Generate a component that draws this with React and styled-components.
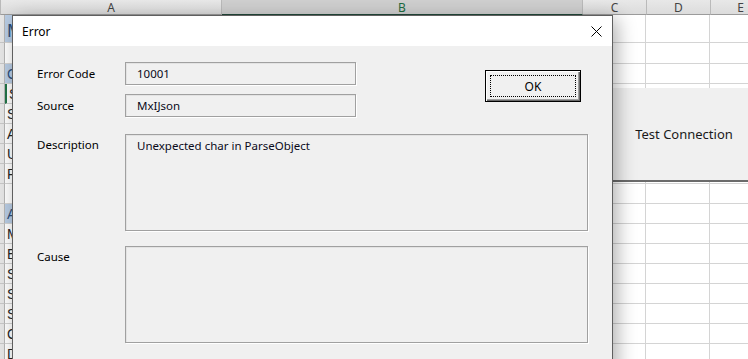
import React from 'react';
import styled, { createGlobalStyle } from 'styled-components';

const GlobalStyle = createGlobalStyle`
  * { box-sizing: border-box; }
  html, body {
    margin: 0;
    padding: 0;
    background: #ffffff;
    overflow: hidden;
  }
  #root {
    width: 748px;
    height: 359px;
  }
`;

const COLS = [5, 216, 361, 64, 64, 60];
const HEADERS = ['', 'A', 'B', 'C', 'D', 'E'];

const ROWS = [
  { h: 28, text: 'M', kind: 'title' },
  { h: 21, text: '' },
  { h: 20, text: 'C', kind: 'head' },
  { h: 20, text: 'S', selected: true },
  { h: 20, text: 'S' },
  { h: 20, text: 'A' },
  { h: 20, text: 'U' },
  { h: 20, text: 'P' },
  { h: 20, text: '' },
  { h: 20, text: 'A', kind: 'head' },
  { h: 20, text: 'M' },
  { h: 20, text: 'E' },
  { h: 20, text: 'S' },
  { h: 20, text: 'S' },
  { h: 20, text: 'S' },
  { h: 20, text: 'C' },
  { h: 20, text: 'D' },
];

/* ---------- spreadsheet behind ---------- */

const Stage = styled.div`
  position: relative;
  width: 748px;
  height: 359px;
  overflow: hidden;
  background: #fff;
`;

const Sheet = styled.div`
  display: flex;
  flex-direction: column;
  width: 800px;
`;

const HeaderRow = styled.div`
  display: flex;
  height: 15px;
`;

const HeaderCell = styled.div`
  flex: 0 0 ${p => p.$w}px;
  height: 15px;
  display: flex;
  align-items: center;
  justify-content: center;
  font-family: 'Noto Sans', 'Open Sans', sans-serif;
  font-size: 12px;
  color: ${p => (p.$active ? '#1e6b40' : '#444')};
  background: ${p => (p.$active ? '#cfcfcf' : 'linear-gradient(#e8e8e8, #dcdcdc)')};
  border-right: 1px solid #bababa;
  border-bottom: 1px solid ${p => (p.$active ? '#22493a' : '#9b9b9b')};
  line-height: 1;
  padding-top: 2px;
`;

const Row = styled.div`
  display: flex;
  height: ${p => p.$h}px;
`;

const Cell = styled.div`
  flex: 0 0 ${p => p.$w}px;
  height: 100%;
  border-right: 1px solid #d4d4d4;
  border-bottom: 1px solid #d4d4d4;
  background: #fff;
`;

const RowStub = styled(Cell)`
  background: #e6e6e6;
  border-right: 1px solid #b5b5b5;
  border-bottom: 1px solid #c8c8c8;
`;

const NameCell = styled(Cell)`
  display: flex;
  align-items: flex-end;
  padding: 0 0 2px 2px;
  font-family: 'Liberation Sans', Arial, sans-serif;
  font-size: ${p => (p.$kind === 'title' ? 19 : 14)}px;
  color: ${p => (p.$kind ? '#2f4f7a' : '#262626')};
  background: ${p => (p.$kind ? '#b8cce4' : '#fff')};
  border-left: ${p => (p.$selected ? '2px solid #217346' : '0')};
  line-height: 1;
`;

const SheetButton = styled.div`
  position: absolute;
  left: 600px;
  top: 88px;
  width: 168px;
  height: 94px;
  background: #f0f0f0;
  border-bottom: 2px solid #6b6b6b;
  display: flex;
  align-items: center;
  justify-content: center;
  font-family: 'Noto Sans', 'Open Sans', sans-serif;
  font-size: 13px;
  color: #1a1a1a;
`;

/* ---------- dialog ---------- */

const Dialog = styled.div`
  position: absolute;
  left: 12px;
  top: 15px;
  width: 601px;
  height: 380px;
  background: #f0f0f0;
  border: 1px solid #5f5f5f;
  box-shadow: 4px 4px 18px rgba(0, 0, 0, 0.32);
  display: flex;
  flex-direction: column;
  font-family: 'Noto Sans', 'Open Sans', sans-serif;
  font-size: 11.5px;
  color: #000;
`;

const TitleBar = styled.div`
  height: 30px;
  flex: 0 0 30px;
  background: #fff;
  display: flex;
  align-items: center;
  justify-content: space-between;
  padding: 0 10px 0 9px;
  font-size: 12px;
`;

const CloseIcon = () => (
  <svg width="11" height="11" viewBox="0 0 11 11">
    <path d="M0.5 0.5 L10.5 10.5 M10.5 0.5 L0.5 10.5" stroke="#000" strokeWidth="1" fill="none" />
  </svg>
);

const Body = styled.div`
  padding: 16px 24px 0 24px;
  display: flex;
  flex-direction: column;
`;

const TopSection = styled.div`
  display: flex;
  align-items: flex-start;
`;

const Fields = styled.div`
  display: flex;
  flex-direction: column;
  gap: 9px;
`;

const FieldRow = styled.div`
  display: flex;
  align-items: ${p => (p.$tall ? 'flex-start' : 'center')};
  margin-top: ${p => p.$mt || 0}px;
`;

const Label = styled.div`
  flex: 0 0 88px;
  padding-top: ${p => (p.$tall ? 3 : 0)}px;
  line-height: 16px;
`;

const Box = styled.div`
  width: ${p => (p.$wide ? 463 : 231)}px;
  height: ${p => (p.$wide ? 97 : 23)}px;
  border: 1px solid #a0a0a0;
  box-shadow: 1px 1px 0 #fff, inset 1px 1px 0 #e3e3e3;
  padding: ${p => (p.$wide ? '3px 0 0 11px' : '0 0 0 11px')};
  display: flex;
  align-items: ${p => (p.$wide ? 'flex-start' : 'center')};
  line-height: 16px;
  color: #0a0a1a;
`;

const OkButton = styled.button`
  position: relative;
  margin: 8px 7px 0 auto;
  width: 96px;
  height: 32px;
  background: #f0f0f0;
  border: 1px solid #000;
  box-shadow: inset 1px 1px 0 #fff, inset -1px -1px 0 #696969, inset -2px -2px 0 #a0a0a0;
  font-family: inherit;
  font-size: 12px;
  color: #000;
  padding: 0;

  &::after {
    content: '';
    position: absolute;
    inset: 4px 4px 4px 4px;
    border: 1px dotted #000;
  }
`;

export default function App() {
  return (
    <>
      <GlobalStyle />
      <Stage>
        <Sheet>
          <HeaderRow>
            {COLS.map((w, i) => (
              <HeaderCell key={i} $w={i === 1 ? w + 5 : i === 0 ? 0 : w} $active={i === 2}>
                {HEADERS[i]}
              </HeaderCell>
            ))}
          </HeaderRow>
          {ROWS.map((r, ri) => (
            <Row key={ri} $h={r.h}>
              <RowStub $w={COLS[0]} />
              <NameCell $w={COLS[1]} $kind={r.kind} $selected={r.selected}>
                {r.text}
              </NameCell>
              {COLS.slice(2).map((w, ci) => (
                <Cell key={ci} $w={w} />
              ))}
            </Row>
          ))}
        </Sheet>

        <SheetButton>Test Connection</SheetButton>

        <Dialog>
          <TitleBar>
            <span>Error</span>
            <CloseIcon />
          </TitleBar>
          <Body>
            <TopSection>
              <Fields>
                <FieldRow>
                  <Label>Error Code</Label>
                  <Box>10001</Box>
                </FieldRow>
                <FieldRow>
                  <Label>Source</Label>
                  <Box>MxIJson</Box>
                </FieldRow>
              </Fields>
              <OkButton>OK</OkButton>
            </TopSection>
            <FieldRow $tall $mt={17}>
              <Label $tall>Description</Label>
              <Box $wide>Unexpected char in ParseObject</Box>
            </FieldRow>
            <FieldRow $tall $mt={15}>
              <Label $tall>Cause</Label>
              <Box $wide />
            </FieldRow>
          </Body>
        </Dialog>
      </Stage>
    </>
  );
}
